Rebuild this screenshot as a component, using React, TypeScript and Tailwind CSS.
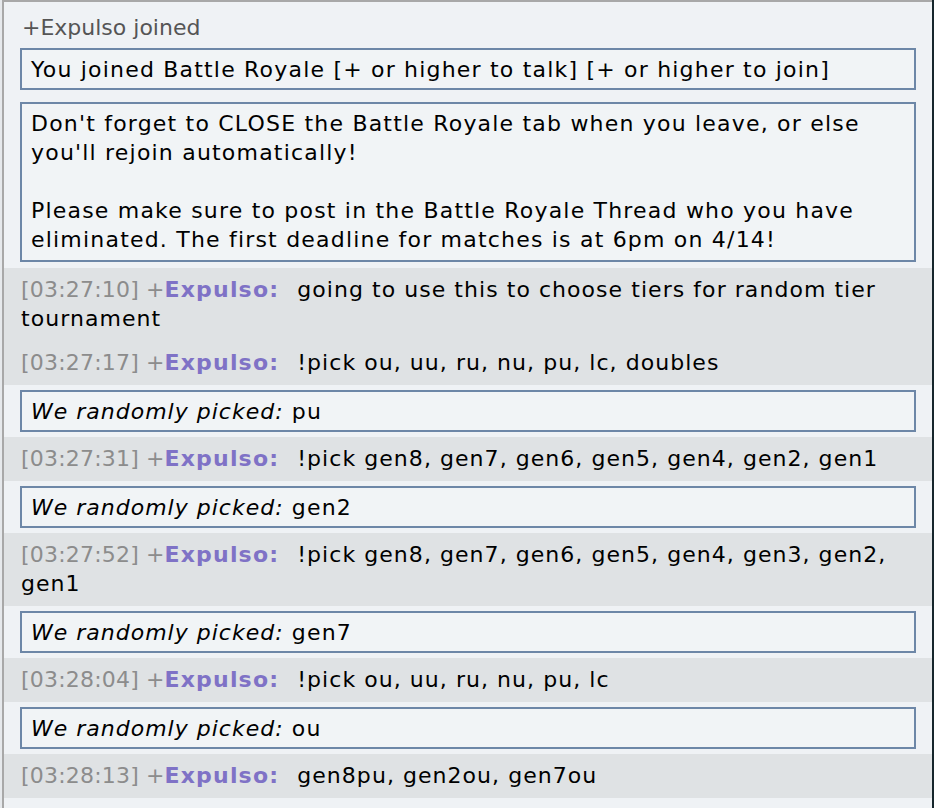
import React from 'react'

type Line =
  | { kind: 'chat'; time: string; text: string[] }
  | { kind: 'pick'; result: string }

const lines: Line[] = [
  { kind: 'chat', time: '03:27:10', text: ['going to use this to choose tiers for random tier', 'tournament'] },
  { kind: 'chat', time: '03:27:17', text: ['!pick ou, uu, ru, nu, pu, lc, doubles'] },
  { kind: 'pick', result: 'pu' },
  { kind: 'chat', time: '03:27:31', text: ['!pick gen8, gen7, gen6, gen5, gen4, gen2, gen1'] },
  { kind: 'pick', result: 'gen2' },
  { kind: 'chat', time: '03:27:52', text: ['!pick gen8, gen7, gen6, gen5, gen4, gen3, gen2,', 'gen1'] },
  { kind: 'pick', result: 'gen7' },
  { kind: 'chat', time: '03:28:04', text: ['!pick ou, uu, ru, nu, pu, lc'] },
  { kind: 'pick', result: 'ou' },
  { kind: 'chat', time: '03:28:13', text: ['gen8pu, gen2ou, gen7ou'] },
]

const InfoBox = ({ children, className = '' }: { children: React.ReactNode; className?: string }) => (
  <div className={`mx-[16px] border-2 border-[#6d87a7] bg-[#f1f4f6] px-[9px] whitespace-nowrap tracking-[1.2px] ${className}`}>
    {children}
  </div>
)

const ChatLine = ({ time, text }: { time: string; text: string[] }) => (
  <div className="bg-[#dfe2e4] pl-[17px] pr-[10px] pt-[7px] pb-[8px] whitespace-nowrap">
    <span className="text-[#8c8c8c] tracking-[0.2px]">[{time}]</span>{' '}
    <span className="text-[#8c8c8c]">+</span>
    <strong className="font-bold text-[#7f72c6] tracking-[1.2px]">Expulso:</strong>
    <span className="ml-[18px] text-black tracking-[1.05px]">
      {text.map((t, i) => (
        <React.Fragment key={i}>
          {i > 0 && <br />}
          {t}
        </React.Fragment>
      ))}
    </span>
  </div>
)

export default function App() {
  return (
    <div
      className="w-[934px] h-[808px] overflow-hidden flex bg-[#eceff2] text-[22px] leading-[29px] text-black"
      style={{ fontFamily: 'Verdana, "DejaVu Sans", sans-serif' }}
    >
      <div className="w-[2px] shrink-0 bg-[#e6e9ec]" />
      <div className="w-[2px] shrink-0 bg-[#a8a8a8]" />
      <div className="flex-1 flex flex-col border-t-2 border-[#a8a8a8] bg-[#eff2f5]">
        <div className="pl-[18px] pt-[11px] text-[#555555]">+Expulso joined</div>
        <InfoBox className="my-[6px] pt-[5px] pb-[4px]">
          You joined Battle Royale [+ or higher to talk] [+ or higher to join]
        </InfoBox>
        <InfoBox className="my-[6px] pt-[5px] pb-[6px]">
          Don't forget to CLOSE the Battle Royale tab when you leave, or else
          <br />
          you'll rejoin automatically!
          <br />
          <br />
          Please make sure to post in the Battle Royale Thread who you have
          <br />
          eliminated. The first deadline for matches is at 6pm on 4/14!
        </InfoBox>
        {lines.map((l, i) =>
          l.kind === 'chat' ? (
            <ChatLine key={i} time={l.time} text={l.text} />
          ) : (
            <InfoBox key={i} className="my-[5px] pt-[5px] pb-[4px]">
              <em className="tracking-[1px]">We randomly picked:</em> {l.result}
            </InfoBox>
          )
        )}
      </div>
      <div className="w-[2px] shrink-0 bg-[#16262c]" />
    </div>
  )
}
